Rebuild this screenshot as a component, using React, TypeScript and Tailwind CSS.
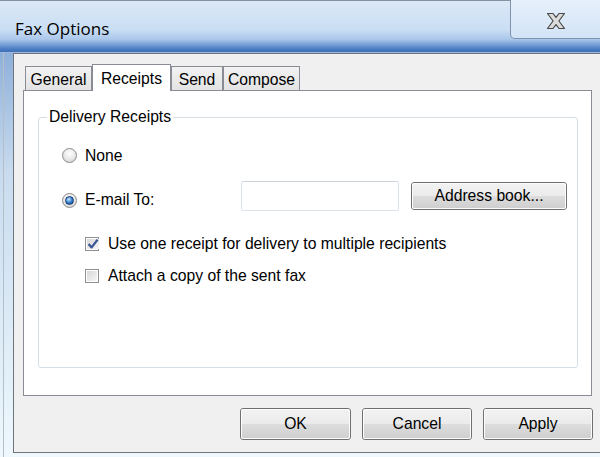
function Radio({ checked }: { checked?: boolean }) {
  return (
    <span className="w-[15px] h-[15px] rounded-full border border-[#8a8a8a] bg-[radial-gradient(circle_at_50%_35%,#ffffff_0%,#eeeeee_40%,#cfcfcf_100%)] flex items-center justify-center shrink-0">
      {checked && (
        <span className="w-[9px] h-[9px] rounded-full bg-[radial-gradient(circle_at_40%_35%,#d6ecff_0%,#3f8ad9_45%,#0b3b80_100%)] border border-[#1a3a6b]" />
      )}
    </span>
  );
}

function Checkbox({ checked }: { checked?: boolean }) {
  return (
    <span className="w-[14px] h-[14px] border border-[#8e8f8f] bg-white p-[1px] shrink-0 flex">
      <span className="flex-1 bg-gradient-to-br from-[#d8d8d8] to-[#f6f6f6] flex items-center justify-center">
        {checked && (
          <svg width="12" height="12" viewBox="0 0 12 12">
            <path d="M1.6 6 L4.6 9.4 L10.6 1.6" fill="none" stroke="#3a5694" strokeWidth="2.3" strokeLinejoin="round" />
          </svg>
        )}
      </span>
    </span>
  );
}

function Button({ label, className = '' }: { label: string; className?: string }) {
  return (
    <div className={`border border-[#707070] rounded-[3px] ${className}`}>
      <div className="h-full rounded-[2px] border border-[#fcfcfc] bg-[linear-gradient(#f2f2f2_0%,#ebebeb_49%,#dddddd_51%,#cfcfcf_100%)] flex items-center justify-center text-[15.7px] text-black">
        {label}
      </div>
    </div>
  );
}

function Tab({ label, selected, width }: { label: string; selected?: boolean; width: string }) {
  if (selected) {
    return (
      <div className={`${width} h-[27px] -mb-px z-10 border border-b-0 border-[#898c95] bg-white flex items-start justify-center pt-[2px] text-[15.7px]`}>
        {label}
      </div>
    );
  }
  return (
    <div className={`${width} h-[24px] border border-b-0 border-[#898c95] bg-[linear-gradient(#f2f2f2,#e3e3e3)] flex items-center justify-center text-[15.7px] pt-[2px]`}>
      {label}
    </div>
  );
}

export default function App() {
  return (
    <div className="w-[600px] h-[457px] overflow-hidden flex flex-col bg-[#eef8fd] font-['Liberation_Sans',Arial,sans-serif] text-black">
      {/* title bar */}
      <div className="h-[53px] shrink-0 flex items-start border-t border-[#8592a3] bg-[linear-gradient(#dbe8f6_0%,#cadef4_55%,#a9c6ea_74%,#4d7fc6_92%,#3f6fb6_97%,#c7d9ee_100%)]">
        <span className="ml-[15px] mt-[17px] text-[17px] leading-[22px] font-['Open_Sans',sans-serif] text-black">
          Fax Options
        </span>
        <div className="ml-auto w-[92px] h-[39px] -mt-px mr-[-2px] border border-t-0 border-[#7f93ad] rounded-bl-[5px] bg-[linear-gradient(#e6f0fb,#d3e3f6)] flex items-center justify-center pt-[3px]">
          <svg width="20" height="18" viewBox="0 0 20 18">
            <path
              d="M1.5 1.5 H7 L10 5.4 L13 1.5 H18.5 L12.9 9 L18.5 16.5 H13 L10 12.6 L7 16.5 H1.5 L7.1 9 Z"
              fill="#dcdcdc"
              stroke="#4a4a4a"
              strokeWidth="1.2"
              strokeLinejoin="round"
            />
          </svg>
        </div>
      </div>

      <div className="flex-1 flex">
        {/* left frame */}
        <div className="w-[13px] shrink-0 bg-[linear-gradient(#8fb0da_0%,#c9dcef_30%,#eef8fd_100%)] flex">
          <div className="ml-[3px] w-px bg-[#b4bfca]" />
        </div>

        {/* client area */}
        <div className="flex-1 h-[400px] border-l border-t border-b border-[#6f757c] bg-[#f0f0f0] flex flex-col">
          <div className="mt-[10px] ml-[9px] w-[569px] flex flex-col">
            <div className="flex items-end pl-[2px]">
              <Tab label="General" width="w-[67px]" />
              <Tab label="Receipts" width="w-[79px]" selected />
              <Tab label="Send" width="w-[52px]" />
              <Tab label="Compose" width="w-[77px]" />
            </div>
            <div className="h-[306px] border border-[#898c95] bg-white pt-[26px] pl-[14px] pr-[13px] pb-[27px]">
              <div className="relative h-full border border-[#d5dfe5] rounded-[3px] pt-[30px] pl-[23px]">
                <span className="absolute left-[8px] -top-[10px] bg-white px-[2px] text-[15.7px] leading-[18px]">
                  Delivery Receipts
                </span>

                <div className="h-[15px] flex items-center gap-[8px] text-[15.7px]">
                  <Radio />
                  <span>None</span>
                </div>

                <div className="mt-[18px] h-[30px] flex items-center">
                  <div className="w-[179px] flex items-center gap-[8px] mt-[8px] text-[15.7px]">
                    <Radio checked />
                    <span>E-mail To:</span>
                  </div>
                  <div className="w-[158px] h-[30px] border border-[#dde3ea] border-t-[#cdd3da] rounded-[2px] bg-white" />
                  <Button label="Address book..." className="ml-[12px] w-[156px] h-[28px]" />
                </div>

                <div className="mt-[25px] pl-[23px] h-[16px] flex items-center gap-[9px] text-[15.7px]">
                  <Checkbox checked />
                  <span>Use one receipt for delivery to multiple recipients</span>
                </div>
                <div className="mt-[16px] pl-[23px] h-[16px] flex items-center gap-[9px] text-[15.7px]">
                  <Checkbox />
                  <span>Attach a copy of the sent fax</span>
                </div>
              </div>
            </div>
          </div>

          <div className="mt-[12px] flex justify-end gap-[11px] pr-[7px]">
            <Button label="OK" className="w-[111px] h-[32px]" />
            <Button label="Cancel" className="w-[110px] h-[32px]" />
            <Button label="Apply" className="w-[110px] h-[32px]" />
          </div>
        </div>
      </div>
    </div>
  );
}
